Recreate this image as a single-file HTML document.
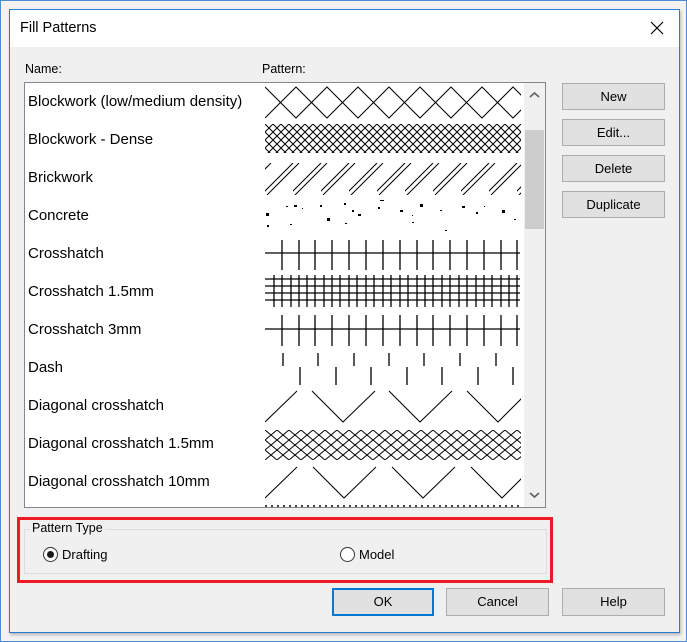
<!DOCTYPE html>
<html><head><style>
body{margin:0;width:687px;height:642px;background:#fff;position:relative;overflow:hidden;font-family:"Liberation Sans",sans-serif;}
.a{position:absolute}
.outer{left:0;top:0;width:685px;height:640px;border:1px solid #4a8fd6;background:#f3f3f3}
.win{left:9px;top:9px;width:669px;height:622px;border:1px solid #2b7bd4;background:#f0f0f0;box-shadow:1px 2px 3px rgba(0,0,0,.25)}
.tb{left:10px;top:10px;width:669px;height:37px;background:#fff}
.t{font-size:14px;color:#000}
.btn{border:1px solid #adadad;background:#e1e1e1;font-size:13px;text-align:center;box-sizing:border-box;line-height:25px}
.list{left:24px;top:82px;width:522px;height:426px;border:1px solid #828790;box-sizing:border-box;background:#fff}
.nm{left:28px;font-size:15px;color:#000}
</style></head><body>
<div class="a outer"></div>
<div class="a win"></div>
<div class="a tb"></div>
<div class="a t" style="left:20px;top:20px;font-size:14.5px">Fill Patterns</div>
<svg class="a" style="left:649px;top:20px" width="16" height="16"><path d="M2 2L14 14M14 2L2 14" stroke="#000" stroke-width="1.2"/></svg>
<div class="a t" style="left:25px;top:62px;font-size:12.5px">Name:</div>
<div class="a t" style="left:262px;top:62px;font-size:12.5px">Pattern:</div>
<div class="a list"></div>
<div class="a" style="left:524px;top:83px;width:21px;height:424px;background:#f0f0f0"></div>
<div class="a" style="left:525px;top:130px;width:19px;height:99px;background:#cdcdcd"></div>
<svg class="a" style="left:524px;top:83px" width="21" height="424"><path d="M6 14L10.5 10L15 14" stroke="#606060" stroke-width="1.6" fill="none"/><path d="M6 410L10.5 414L15 410" stroke="#606060" stroke-width="1.6" fill="none"/></svg>
<div class="a nm" style="top:93px">Blockwork (low/medium density)</div>
<div class="a nm" style="top:131px">Blockwork - Dense</div>
<div class="a nm" style="top:169px">Brickwork</div>
<div class="a nm" style="top:207px">Concrete</div>
<div class="a nm" style="top:245px">Crosshatch</div>
<div class="a nm" style="top:283px">Crosshatch 1.5mm</div>
<div class="a nm" style="top:321px">Crosshatch 3mm</div>
<div class="a nm" style="top:359px">Dash</div>
<div class="a nm" style="top:397px">Diagonal crosshatch</div>
<div class="a nm" style="top:435px">Diagonal crosshatch 1.5mm</div>
<div class="a nm" style="top:473px">Diagonal crosshatch 10mm</div>
<svg class="a" style="left:0;top:0" width="687" height="642">
<defs>
<pattern id="dx" x="265" y="124" width="8" height="8" patternUnits="userSpaceOnUse"><path d="M0 0L8 8M8 0L0 8" stroke="#000" stroke-width="1"/></pattern>
<pattern id="dx2" x="265" y="430" width="12" height="10" patternUnits="userSpaceOnUse"><path d="M0 0L12 10M12 0L0 10" stroke="#000" stroke-width="1"/></pattern>
<pattern id="br" x="265" y="163" width="28" height="32" patternUnits="userSpaceOnUse"><path d="M-32 32L0 0M-26 32L6 0M-4 32L28 0M2 32L34 0" stroke="#000" stroke-width="1"/></pattern>
<clipPath id="c"><rect x="265" y="83" width="256" height="424"/></clipPath>
</defs>
<g clip-path="url(#c)" stroke="#000" fill="none" stroke-width="1">
<path d="M265 87L296 118L327 87L358 118L389 87L420 118L451 87L482 118L513 87L544 118"/>
<path d="M265 118L296 87L327 118L358 87L389 118L420 87L451 118L482 87L513 118L544 87"/>
<rect x="265" y="124" width="256" height="29" fill="url(#dx)" stroke="none"/>
<rect x="265" y="163" width="256" height="32" fill="url(#br)" stroke="none"/>
<path d="M265 253H520M282 240V270M299 240V270M315 240V270M332 240V270M349 240V270M366 240V270M383 240V270M400 240V270M417 240V270M433 240V270M450 240V270M467 240V270M484 240V270M501 240V270M517 240V270" stroke-width="1.3"/>
<path d="M265 279H520M265 286H520M265 293H520M265 300H520" stroke-width="1.3"/>
<path d="M274 275V307M282 275V307M291 275V307M299 275V307M307 275V307M315 275V307M324 275V307M332 275V307M340 275V307M349 275V307M357 275V307M366 275V307M374 275V307M383 275V307M391 275V307M400 275V307M408 275V307M417 275V307M425 275V307M433 275V307M442 275V307M450 275V307M459 275V307M467 275V307M476 275V307M484 275V307M492 275V307M501 275V307M509 275V307M517 275V307" stroke-width="1.3"/>
<path d="M265 329H520M282 315V346M299 315V346M315 315V346M332 315V346M349 315V346M366 315V346M383 315V346M400 315V346M417 315V346M433 315V346M450 315V346M467 315V346M484 315V346M501 315V346M517 315V346" stroke-width="1.3"/>
<path d="M283 353V366M318 353V366M354 353V366M389 353V366M424 353V366M460 353V366M496 353V366M300 367V385M336 367V385M371 367V385M407 367V385M442 367V385M478 367V385M513 367V385" stroke-width="1.3"/>
<path d="M265 422L297 391M312 391L343 422L375 391M389 391L420 422L452 391M467 391L498 422L522 398"/>
<rect x="265" y="430" width="256" height="30" fill="url(#dx2)" stroke="none"/>
<path d="M265 498L297 467M313 467L344 498L376 467M392 467L423 498L455 467M471 467L502 498L522 478"/>
<path d="M265 506H520" stroke-dasharray="2 4" stroke-width="1.5"/>
</g>
<g fill="#000" clip-path="url(#c)">
<rect x="266" y="213" width="3" height="3"/><rect x="286" y="206" width="2" height="1"/><rect x="294" y="205" width="3" height="2"/><rect x="302" y="208" width="1" height="1"/><rect x="320" y="205" width="2" height="2"/><rect x="327" y="218" width="3" height="3"/><rect x="344" y="203" width="2" height="2"/><rect x="352" y="210" width="2" height="2"/><rect x="358" y="214" width="3" height="2"/><rect x="380" y="200" width="4" height="1"/><rect x="378" y="207" width="2" height="2"/><rect x="400" y="210" width="3" height="2"/><rect x="412" y="215" width="1" height="1"/><rect x="420" y="204" width="3" height="3"/><rect x="440" y="210" width="2" height="1"/><rect x="462" y="206" width="3" height="2"/><rect x="476" y="212" width="2" height="2"/><rect x="484" y="206" width="1" height="1"/><rect x="502" y="210" width="3" height="3"/><rect x="514" y="219" width="2" height="1"/><rect x="290" y="224" width="2" height="1"/><rect x="345" y="223" width="2" height="1"/><rect x="412" y="222" width="2" height="1"/><rect x="267" y="225" width="2" height="2"/><rect x="445" y="230" width="2" height="1"/>
</g>
</svg>
<div class="a btn" style="left:562px;top:83px;width:103px;height:27px">New</div>
<div class="a btn" style="left:562px;top:119px;width:103px;height:27px">Edit...</div>
<div class="a btn" style="left:562px;top:155px;width:103px;height:27px">Delete</div>
<div class="a btn" style="left:562px;top:191px;width:103px;height:27px">Duplicate</div>
<div class="a" style="left:17px;top:517px;width:536px;height:66px;border:3px solid #ed1c24;box-sizing:border-box"></div>
<div class="a" style="left:24px;top:529px;width:523px;height:45px;border:1px solid #dcdcdc;box-sizing:border-box"></div>
<div class="a t" style="left:30px;top:521px;font-size:12.5px;background:#f0f0f0;padding:0 2px">Pattern Type</div>
<div class="a" style="left:43px;top:547px;width:15px;height:15px;border:1px solid #333;border-radius:50%;box-sizing:border-box;background:#fff"></div>
<div class="a" style="left:47px;top:551px;width:7px;height:7px;border-radius:50%;background:#1a1a1a"></div>
<div class="a t" style="left:62px;top:547px;font-size:13px">Drafting</div>
<div class="a" style="left:340px;top:547px;width:15px;height:15px;border:1px solid #333;border-radius:50%;box-sizing:border-box;background:#fff"></div>
<div class="a t" style="left:359px;top:547px;font-size:13px">Model</div>
<div class="a btn" style="left:332px;top:588px;width:102px;height:28px;border:2px solid #0078d7;line-height:24px">OK</div>
<div class="a btn" style="left:446px;top:588px;width:103px;height:28px">Cancel</div>
<div class="a btn" style="left:562px;top:588px;width:103px;height:28px">Help</div>
</body></html>
